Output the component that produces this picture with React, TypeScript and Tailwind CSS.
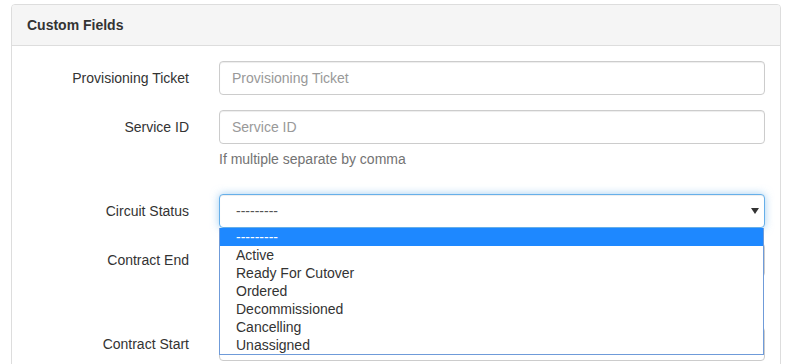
const statusOptions = [
  "---------",
  "Active",
  "Ready For Cutover",
  "Ordered",
  "Decommissioned",
  "Cancelling",
  "Unassigned",
];

function FieldRow({
  label,
  children,
}: {
  label: string;
  children: React.ReactNode;
}) {
  return (
    <div className="mb-[15px] flex">
      <label className="w-[192px] shrink-0 pr-[15px] pt-[7px] text-right text-[14px] leading-[20px] text-[#333]">
        {label}
      </label>
      <div className="relative flex-1 px-[15px]">{children}</div>
    </div>
  );
}

function TextInput({ placeholder }: { placeholder?: string }) {
  return (
    <input
      type="text"
      placeholder={placeholder}
      className="block h-[34px] w-full rounded-[4px] border border-[#ccc] bg-white px-[12px] py-[6px] text-[14px] leading-[20px] text-[#555] shadow-[inset_0_1px_1px_rgba(0,0,0,0.075)] outline-none placeholder:text-[#999]"
    />
  );
}

function HelpText({ children }: { children: React.ReactNode }) {
  return (
    <p className="mb-[10px] mt-[5px] text-[14px] leading-[20px] text-[#737373]">
      {children}
    </p>
  );
}

function StatusSelect() {
  return (
    <div className="relative">
      <div className="flex h-[34px] w-full items-center rounded-[4px] border border-[#66afe9] bg-white pl-[16px] pr-[5px] text-[14px] text-[#555] shadow-[inset_0_1px_1px_rgba(0,0,0,0.075),0_0_8px_rgba(102,175,233,0.6)]">
        <span className="flex-1">---------</span>
        <svg width="8" height="6" viewBox="0 0 8 6">
          <path d="M0 0h8L4 6z" fill="#333" />
        </svg>
      </div>
      <ul className="absolute left-0 right-[1px] top-full z-10 border-x border-b border-[#6f9bd9] bg-white">
        {statusOptions.map((option, index) => (
          <li
            key={option}
            className={
              index === 0
                ? "h-[18px] bg-[#1e88ff] pl-[16px] text-[14px] leading-[18px] text-white"
                : "h-[18px] pl-[16px] text-[14px] leading-[18px] text-[#333]"
            }
          >
            {option}
          </li>
        ))}
      </ul>
    </div>
  );
}

export default function App() {
  return (
    <div className="min-h-screen bg-white pl-[11px] pr-[10px] pt-[4px] font-['Liberation_Sans',Arial,sans-serif]">
      <div className="rounded-[4px] border border-[#ddd] bg-white">
        <div className="rounded-t-[3px] border-b border-[#ddd] bg-[#f5f5f5] px-[15px] py-[10px]">
          <h3 className="text-[14px] font-bold leading-[20px] text-[#333]">
            Custom Fields
          </h3>
        </div>
        <div className="pt-[15px]">
          <FieldRow label="Provisioning Ticket">
            <TextInput placeholder="Provisioning Ticket" />
          </FieldRow>
          <FieldRow label="Service ID">
            <TextInput placeholder="Service ID" />
            <HelpText>If multiple separate by comma</HelpText>
          </FieldRow>
          <FieldRow label="Circuit Status">
            <StatusSelect />
          </FieldRow>
          <FieldRow label="Contract End">
            <TextInput />
            {/* help line sits under the open dropdown */}
            <div className="mb-[10px] mt-[5px] h-[20px]" />
          </FieldRow>
          <FieldRow label="Contract Start">
            <TextInput />
          </FieldRow>
        </div>
      </div>
    </div>
  );
}
